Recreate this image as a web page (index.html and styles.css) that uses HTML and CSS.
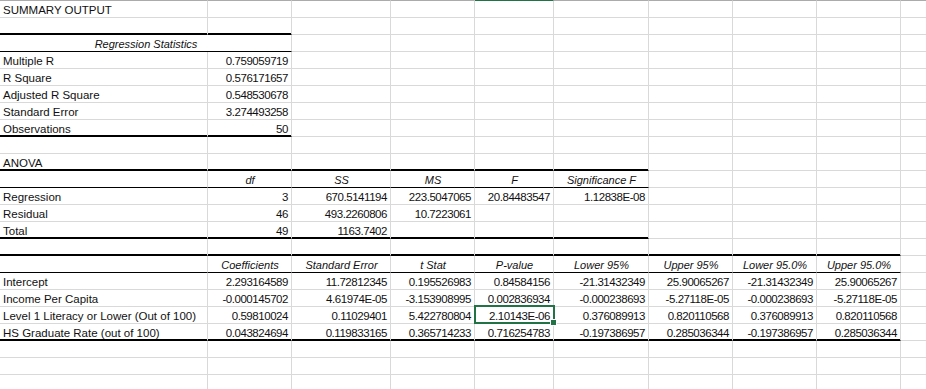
FILE: index.html
```html
<!DOCTYPE html>
<html>
<head>
<meta charset="utf-8">
<title>Summary Output</title>
<link rel="stylesheet" href="styles.css">
</head>
<body>
<table class="sheet">
<colgroup>
<col class="ca"><col class="cb"><col class="cc"><col class="cd"><col class="ce"><col class="cf"><col class="cg"><col class="ch"><col class="ci"><col class="cj">
</colgroup>
<tbody>
<tr class="first"><td>SUMMARY OUTPUT</td><td></td><td></td><td></td><td class="active-col"></td><td></td><td></td><td></td><td></td><td></td></tr>
<tr><td class="ab"></td><td class="ab"></td><td></td><td></td><td></td><td></td><td></td><td></td><td></td><td></td></tr>
<tr><td colspan="2" class="hd">Regression Statistics</td><td></td><td></td><td></td><td></td><td></td><td></td><td></td><td></td></tr>
<tr><td>Multiple R</td><td class="n">0.759059719</td><td></td><td></td><td></td><td></td><td></td><td></td><td></td><td></td></tr>
<tr><td>R Square</td><td class="n">0.576171657</td><td></td><td></td><td></td><td></td><td></td><td></td><td></td><td></td></tr>
<tr><td>Adjusted R Square</td><td class="n">0.548530678</td><td></td><td></td><td></td><td></td><td></td><td></td><td></td><td></td></tr>
<tr><td>Standard Error</td><td class="n">3.274493258</td><td></td><td></td><td></td><td></td><td></td><td></td><td></td><td></td></tr>
<tr><td class="tb">Observations</td><td class="n tb">50</td><td></td><td></td><td></td><td></td><td></td><td></td><td></td><td></td></tr>
<tr><td></td><td></td><td></td><td></td><td></td><td></td><td></td><td></td><td></td><td></td></tr>
<tr><td class="ab">ANOVA</td><td class="ab"></td><td class="ab"></td><td class="ab"></td><td class="ab"></td><td class="ab"></td><td></td><td></td><td></td><td></td></tr>
<tr><td class="hd"></td><td class="hd">df</td><td class="hd">SS</td><td class="hd">MS</td><td class="hd">F</td><td class="hd">Significance F</td><td></td><td></td><td></td><td></td></tr>
<tr><td>Regression</td><td class="n">3</td><td class="n">670.5141194</td><td class="n">223.5047065</td><td class="n">20.84483547</td><td class="n">1.12838E-08</td><td></td><td></td><td></td><td></td></tr>
<tr><td>Residual</td><td class="n">46</td><td class="n">493.2260806</td><td class="n">10.7223061</td><td></td><td></td><td></td><td></td><td></td><td></td></tr>
<tr><td class="tb">Total</td><td class="n tb">49</td><td class="n tb">1163.7402</td><td class="tb"></td><td class="tb"></td><td class="tb"></td><td></td><td></td><td></td><td></td></tr>
<tr><td class="ab"></td><td class="ab"></td><td class="ab"></td><td class="ab"></td><td class="ab"></td><td class="ab"></td><td class="ab"></td><td class="ab"></td><td class="ab"></td><td></td></tr>
<tr><td class="hd"></td><td class="hd">Coefficients</td><td class="hd">Standard Error</td><td class="hd">t Stat</td><td class="hd">P-value</td><td class="hd">Lower 95%</td><td class="hd">Upper 95%</td><td class="hd">Lower 95.0%</td><td class="hd">Upper 95.0%</td><td></td></tr>
<tr><td>Intercept</td><td class="n">2.293164589</td><td class="n">11.72812345</td><td class="n">0.195526983</td><td class="n">0.84584156</td><td class="n">-21.31432349</td><td class="n">25.90065267</td><td class="n">-21.31432349</td><td class="n">25.90065267</td><td></td></tr>
<tr><td>Income Per Capita</td><td class="n">-0.000145702</td><td class="n">4.61974E-05</td><td class="n">-3.153908995</td><td class="n">0.002836934</td><td class="n">-0.000238693</td><td class="n">-5.27118E-05</td><td class="n">-0.000238693</td><td class="n">-5.27118E-05</td><td></td></tr>
<tr><td>Level 1 Literacy or Lower (Out of 100)</td><td class="n">0.59810024</td><td class="n">0.11029401</td><td class="n">5.422780804</td><td class="n sel">2.10143E-06<span class="handle"></span></td><td class="n">0.376089913</td><td class="n">0.820110568</td><td class="n">0.376089913</td><td class="n">0.820110568</td><td></td></tr>
<tr><td class="tb">HS Graduate Rate (out of 100)</td><td class="n tb">0.043824694</td><td class="n tb">0.119833165</td><td class="n tb">0.365714233</td><td class="n tb">0.716254783</td><td class="n tb">-0.197386957</td><td class="n tb">0.285036344</td><td class="n tb">-0.197386957</td><td class="n tb">0.285036344</td><td></td></tr>
<tr><td></td><td></td><td></td><td></td><td></td><td></td><td></td><td></td><td></td><td></td></tr>
<tr><td></td><td></td><td></td><td></td><td></td><td></td><td></td><td></td><td></td><td></td></tr>
<tr><td></td><td></td><td></td><td></td><td></td><td></td><td></td><td></td><td></td><td></td></tr>
</tbody>
</table>
</body>
</html>
```

FILE: styles.css
```css
html, body {
  margin: 0;
  padding: 0;
  background: #ffffff;
  overflow: hidden;
}

.sheet {
  border-collapse: separate;
  border-spacing: 0;
  table-layout: fixed;
  width: 950px;
  font-family: "Liberation Sans", Arial, sans-serif;
  font-size: 11.5px;
  color: #111111;
}

.ca { width: 208px; }
.cb { width: 84px; }
.cc { width: 99px; }
.cd { width: 84px; }
.ce { width: 79px; }
.cf { width: 95px; }
.cg { width: 84px; }
.ch { width: 84px; }
.ci { width: 84px; }
.cj { width: 49px; }

.sheet td {
  box-sizing: content-box;
  height: 16px;
  padding: 0 2px 0 3px;
  border: 0;
  border-right: 1px solid #d9d9d9;
  border-bottom: 1px solid #d9d9d9;
  white-space: nowrap;
  overflow: visible;
  vertical-align: bottom;
  line-height: 14px;
}

.sheet tr.first td {
  border-top: 1px solid #ababab;
}

.sheet tr.first td.active-col {
  border-top-color: #217346;
}

/* row above a table: its bottom edge is the heavy top rule */
.sheet td.ab {
  border-bottom-color: #000000;
  box-shadow: inset 0 -1px 0 #000000;
}

.sheet td.n {
  text-align: right;
  letter-spacing: -0.45px;
  padding-right: 3px;
}

.sheet td.hd {
  font-style: italic;
  font-size: 11px;
  text-align: center;
  border-bottom-color: #000000;
}

.sheet td.tb {
  border-bottom-color: #000000;
  box-shadow: inset 0 -1px 0 #000000;
}

.sheet td.sel {
  position: relative;
}

.sheet td.sel::after {
  content: "";
  position: absolute;
  left: -1px;
  top: -2px;
  right: -2px;
  bottom: -1px;
  border: 2px solid #217346;
  pointer-events: none;
}

.handle {
  position: absolute;
  right: -4px;
  bottom: -3px;
  width: 5px;
  height: 5px;
  background: #217346;
  border: 1px solid #ffffff;
  z-index: 2;
}
```
